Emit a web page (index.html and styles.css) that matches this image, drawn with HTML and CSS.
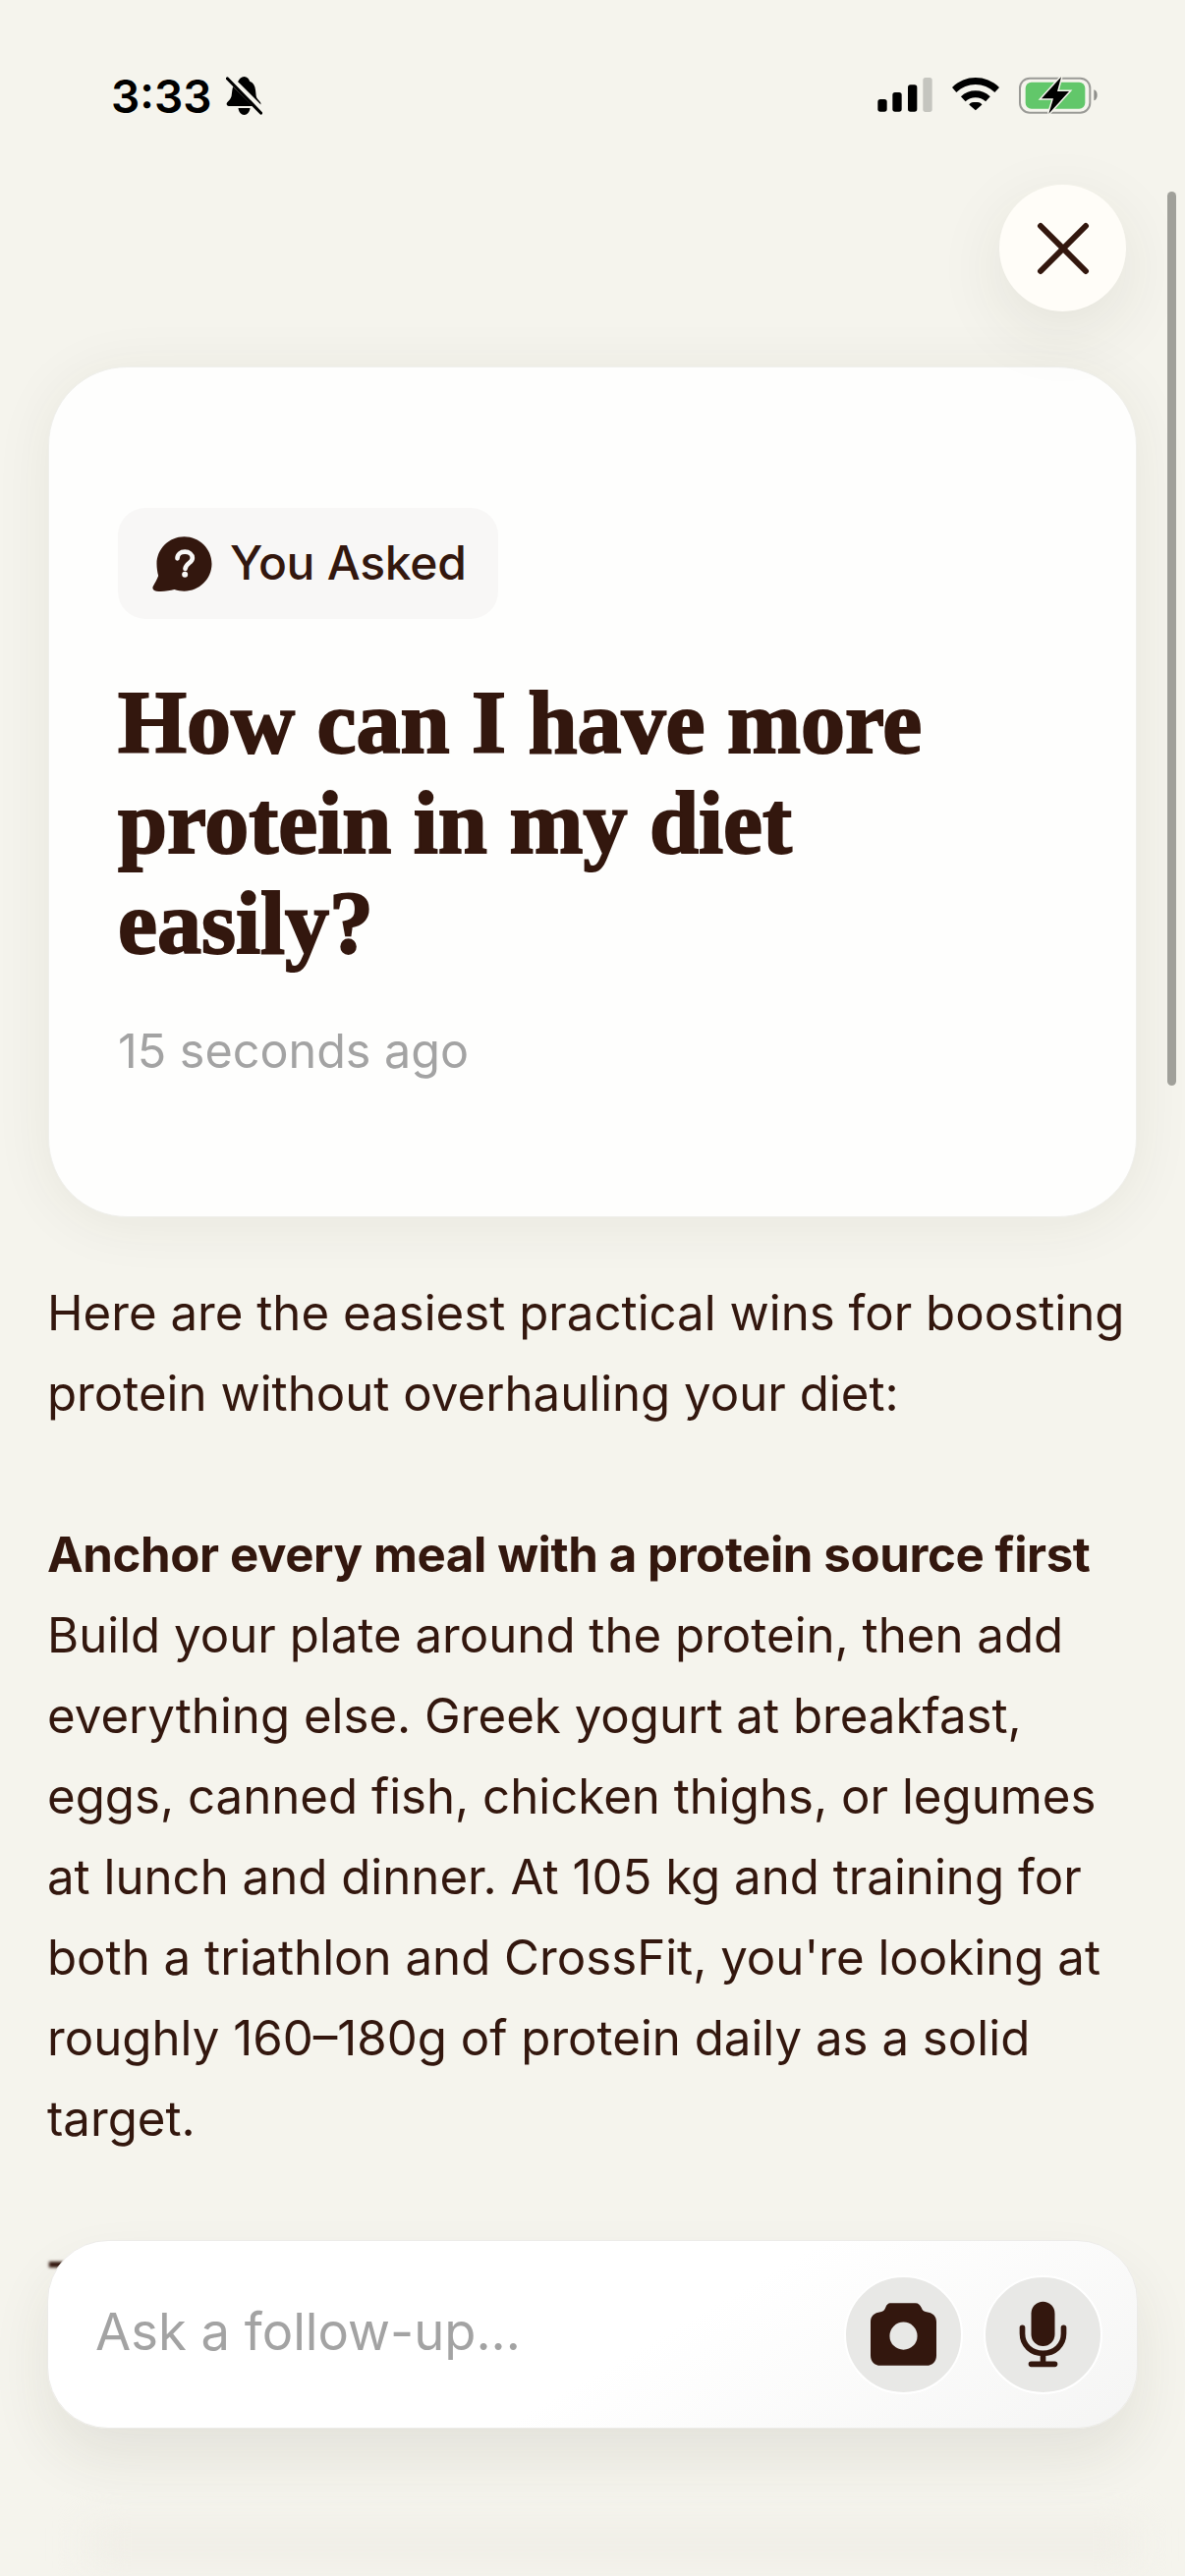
FILE: index.html
```html
<!DOCTYPE html>
<html lang="en">
<head>
  <meta charset="UTF-8">
  <title>You Asked</title>
  <link rel="stylesheet" href="styles.css">
</head>
<body>
  <div class="page">
    <div class="status">
      <div class="status-left">
        <span class="time">3:33</span>
        <svg class="bell" viewBox="0 0 37 40">
          <path fill="#000" d="M18.500 0c3 0 5 2.200 5.600 4.800 3.600 1.300 5.400 4.400 5.900 8.600l.7 6.400c.3 2.300 2.600 4.300 4.300 6.400 1 1.400.3 3.800-1.800 3.800H3c-2.300 0-3-2.500-1.800-3.800 1.800-2 4-3.800 4.400-6.400l.8-6.400c.5-4.200 2.300-7.300 6-8.600C13.500 2.200 15.500 0 18.500 0z"/>
          <path fill="#000" d="M12.500 32h12c-.4 4-3 7-6 7s-5.600-3-6-7z"/>
          <path stroke="#f5f4ed" stroke-width="7" d="M0 -2 40 38"/>
          <path stroke="#000" stroke-width="3.200" stroke-linecap="round" d="M1.500 2 35.500 37"/>
        </svg>
      </div>
      <div class="status-right">
        <svg class="signal" viewBox="100 120 166 105">
          <rect x="100" y="186" width="28" height="38" rx="8" fill="#000"/>
          <rect x="145" y="165" width="28" height="59" rx="8" fill="#000"/>
          <rect x="192" y="142" width="28" height="82" rx="8" fill="#000"/>
          <rect x="238" y="120" width="28" height="105" rx="8" fill="#c5c5bf"/>
        </svg>
        <svg class="wifi" viewBox="325 120 145 105">
          <path fill="#000" d="M397 120c27 0 52 10 73 30l-14 15c-17-15-37-24-59-24s-42 9-59 24l-13-15c21-20 45-30 72-30z"/>
          <path fill="#000" d="M397 160c17 0 32 6 45 18l-14 15c-9-8-19-12-31-12s-22 4-31 12l-14-15c13-12 28-18 45-18z"/>
          <path fill="#000" d="M397 200c-8 0-15 0-20 8l20 17 20-17c-5-8-12-8-20-8z" transform="translate(0 -5)"/>
        </svg>
        <svg class="battery" viewBox="532 112 238 120">
          <rect x="534" y="120" width="214" height="105" rx="30" fill="none" stroke="#9a9a96" stroke-width="6"/>
          <rect x="551" y="132" width="182" height="81" rx="18" fill="#62c76a"/>
          <path fill="#8f8f8b" d="M760 155c7 2 10 8 10 16s-3 15-10 17z"/>
          <path fill="#000" stroke="#f5f4ed" stroke-width="9" paint-order="stroke" d="M660 116 600 182h36l-14 46 62-68h-36z"/>
        </svg>
      </div>
    </div>

    <div class="close-row">
      <button class="close">
        <svg viewBox="0 0 54 54"><path d="M4 4 50 50M50 4 4 50"/></svg>
      </button>
    </div>

    <div class="card">
      <div class="pill">
        <svg class="pill-icon" viewBox="375 550 182 168">
          <path fill="#33170e" d="M472 551c46 0 84 37 84 83s-38 83-84 83c-11 0-20-2-30-5-16 4-34 7-55 5-9-1-14-8-10-15 6-11 12-20 16-32-3-11-5-24-5-36 0-46 38-83 84-83z"/>
          <path fill="none" stroke="#f9f8f7" stroke-width="14" stroke-linecap="round" d="M451 617c0-12 10-20 23-20s23 8 23 19c0 15-20 15-22 33"/>
          <circle cx="474" cy="666" r="9" fill="#f9f8f7"/>
        </svg>
        <span class="pill-text">You Asked</span>
      </div>
      <h1 class="question">How can I have more protein in my diet easily?</h1>
      <p class="ago">15 seconds ago</p>
    </div>

    <div class="answer">
      <p>Here are the easiest practical wins for boosting protein without overhauling your diet:</p>
      <p><strong>Anchor every meal with a protein source first</strong><br>Build your plate around the protein, then add everything else. Greek yogurt at breakfast, eggs, canned fish, chicken thighs, or legumes at lunch and dinner. At 105 kg and training for both a triathlon and CrossFit, you're looking at roughly 160–180g of protein daily as a solid target.</p>
      <p class="behind"><strong>T</strong></p>
    </div>

    <div class="scrollbar"></div>
    <div class="bottom-fade"></div>

    <div class="composer">
      <span class="placeholder">Ask a follow-up...</span>
      <div class="composer-btns">
        <button class="round">
          <svg viewBox="236 308 200 190">
            <path fill="#33170e" fill-rule="evenodd" d="M298 308h74c10 0 15 6 19 15 2 7 7 11 15 12 18 2 30 12 30 30v102c0 18-12 31-30 31H266c-18 0-30-13-30-31V365c0-18 12-28 30-30 8-1 12-5 15-12 3-9 7-15 17-15zM336 366a42 42 0 1 0 0 84 42 42 0 1 0 0-84z"/>
          </svg>
        </button>
        <button class="round">
          <svg viewBox="695 306 146 204">
            <rect x="732" y="308" width="72" height="136" rx="36" fill="#33170e"/>
            <path fill="none" stroke="#33170e" stroke-width="17" stroke-linecap="round" d="M705 388v18c0 36 28 60 63 60s63-24 63-60v-18M768 466v32M732 499h72"/>
          </svg>
        </button>
      </div>
    </div>
  </div>
</body>
</html>
```

FILE: styles.css
```css
* {
  box-sizing: border-box;
}
html, body {
  margin: 0;
  padding: 0;
}
body {
  background: #f5f4ed;
  font-family: Inter, "Liberation Sans", sans-serif;
  color: #33170e;
}
.page {
  position: relative;
  height: 2622px;
  overflow: hidden;
  background: #f5f4ed;
}

/* status bar */
.status {
  display: flex;
  justify-content: space-between;
  align-items: center;
  height: 126px;
  padding: 70px 89px 0 113px;
}
.status-left {
  display: flex;
  align-items: center;
  gap: 15px;
}
.time {
  font-size: 46px;
  font-weight: 600;
  color: #000;
}
.bell {
  width: 37px;
  height: 40px;
}
.status-right {
  display: flex;
  align-items: center;
  gap: 20px;
  padding-bottom: 3px;
}
.signal {
  width: 56px;
  height: 35px;
}
.wifi {
  width: 48px;
  height: 35px;
}
.battery {
  width: 80px;
  height: 40px;
}

/* close */
.close-row {
  display: flex;
  justify-content: flex-end;
  margin-top: 62px;
  padding-right: 60px;
}
.close {
  display: flex;
  align-items: center;
  justify-content: center;
  width: 129px;
  height: 129px;
  padding: 0;
  border: none;
  border-radius: 50%;
  background: #fffdf8;
  box-shadow: 0 20px 70px rgba(60, 50, 30, 0.09);
}
.close svg {
  width: 54px;
  height: 54px;
}
.close path {
  fill: none;
  stroke: #33170e;
  stroke-width: 6;
  stroke-linecap: round;
}

/* question card */
.card {
  margin: 56px 49px 0;
  height: 866px;
  padding: 143px 70px 0;
  background: #fefefd;
  border-radius: 80px;
  border: 1px solid #efefeb;
  box-shadow: 0 6px 60px rgba(60, 50, 30, 0.07);
}
.pill {
  display: inline-flex;
  align-items: center;
  gap: 18px;
  height: 113px;
  padding: 0 32px 0 35px;
  background: #f8f7f6;
  border-radius: 28px;
  font-size: 48px;
  font-weight: 500;
  letter-spacing: -0.3px;
  vertical-align: top;
}
.pill-icon {
  width: 61px;
  height: 56px;
}
.pill-text {
  padding-bottom: 2px;
}
.question {
  margin: 55px 0 0;
  max-width: 860px;
  font-family: "Liberation Serif", serif;
  font-size: 90px;
  line-height: 102px;
  font-weight: 700;
  -webkit-text-stroke: 2px #33170e;
}
.ago {
  margin: 49px 0 0;
  font-size: 48.500px;
  line-height: 60px;
  color: #a3a3a3;
}

/* answer text */
.answer {
  margin-top: 56px;
  padding: 0 40px 0 48px;
  font-size: 49.200px;
  line-height: 82px;
}
.answer p {
  margin: 0 0 82px;
}
.answer strong {
  font-weight: 700;
  letter-spacing: -0.400px;
}
.behind {
  filter: blur(1.500px);
}

/* overlays */
.scrollbar {
  position: absolute;
  top: 195px;
  left: 1188px;
  width: 9px;
  height: 910px;
  border-radius: 5px;
  background: #a0a09a;
}
.bottom-fade {
  position: absolute;
  left: 90px;
  right: 50px;
  bottom: 14px;
  height: 36px;
  background: #efede6;
  filter: blur(18px);
}
.composer {
  position: absolute;
  left: 48px;
  top: 2280px;
  width: 1110px;
  height: 192px;
  display: flex;
  align-items: center;
  justify-content: space-between;
  padding: 0 35px 0 48px;
  background: linear-gradient(150deg, #ffffff 55%, #f5f5f4);
  border: 1px solid #ecebe8;
  border-radius: 62px;
  box-shadow: 0 30px 60px rgba(60, 50, 30, 0.09);
}
.placeholder {
  padding-bottom: 6px;
  font-size: 52.500px;
  color: #a3a3a3;
}
.composer-btns {
  display: flex;
  gap: 21px;
}
.round {
  display: flex;
  align-items: center;
  justify-content: center;
  width: 121px;
  height: 121px;
  padding: 0;
  border: 2px solid #fff;
  border-radius: 50%;
  background: #e8e8e6;
}
.round svg {
  width: 67px;
  height: 68px;
}
```
